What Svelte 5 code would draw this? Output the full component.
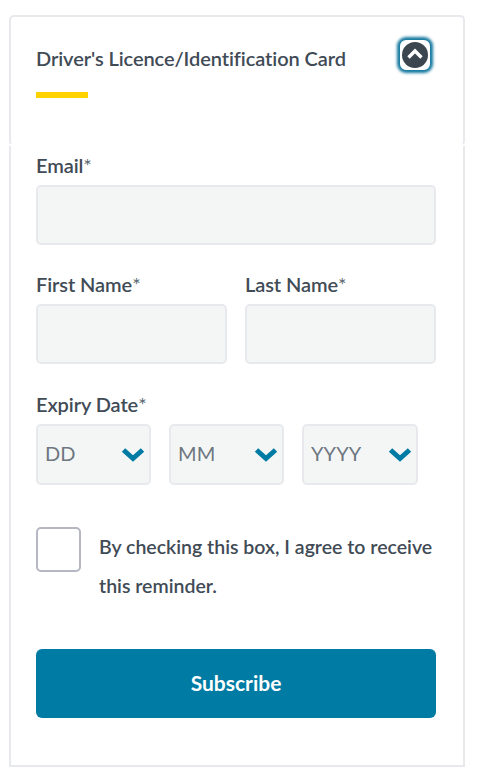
<script lang="ts">
  let email = $state('');
  let firstName = $state('');
  let lastName = $state('');
  let agreed = $state(false);

  const dateParts = [
    { id: 'day', placeholder: 'DD' },
    { id: 'month', placeholder: 'MM' },
    { id: 'year', placeholder: 'YYYY' }
  ];
</script>

<main>
  <section class="header">
    <h2>Driver's Licence/Identification Card</h2>
    <button class="toggle" aria-label="Collapse">
      <svg viewBox="0 0 26 26" width="26" height="26">
        <circle cx="13" cy="13" r="13" fill="#3c4650" />
        <path d="M6.5 15.5 13 9l6.5 6.5" fill="none" stroke="#fff" stroke-width="3.4" />
      </svg>
    </button>
    <div class="accent"></div>
  </section>

  <form class="body" onsubmit={(e) => e.preventDefault()}>
    <div class="field email">
      <label for="email">Email<span>*</span></label>
      <input id="email" type="text" bind:value={email} />
    </div>

    <div class="names">
      <div class="field">
        <label for="first">First Name<span>*</span></label>
        <input id="first" type="text" bind:value={firstName} />
      </div>
      <div class="field">
        <label for="last">Last Name<span>*</span></label>
        <input id="last" type="text" bind:value={lastName} />
      </div>
    </div>

    <div class="field expiry">
      <label for="day">Expiry Date<span>*</span></label>
      <div class="dates">
        {#each dateParts as part}
          <div class="select" id={part.id}>
            <span>{part.placeholder}</span>
            <svg viewBox="0 0 24 15" width="24" height="15">
              <path d="M2.5 3 12 11.5 21.5 3" fill="none" stroke="#007ba3" stroke-width="5" />
            </svg>
          </div>
        {/each}
      </div>
    </div>

    <label class="consent">
      <input type="checkbox" bind:checked={agreed} />
      <span>By checking this box, I agree to receive this reminder.</span>
    </label>

    <button class="subscribe" type="submit">Subscribe</button>
  </form>
</main>

<style>
  :global(body) {
    background: #fff;
    font-family: Lato, "Open Sans", sans-serif;
    color: #414b56;
  }

  main {
    padding: 15px 14px 16px 9px;
  }

  .header {
    position: relative;
    height: 131px;
    box-sizing: border-box;
    border: 2px solid #e8e9ed;
    border-bottom-color: transparent;
    border-radius: 5px;
    padding: 29px 25px 0;
  }

  h2 {
    margin: 0;
    font-size: 20px;
    line-height: 24px;
    font-weight: 600;
    letter-spacing: -0.08px;
  }

  .toggle {
    position: absolute;
    top: 23px;
    right: 33px;
    width: 26px;
    height: 26px;
    padding: 0;
    box-sizing: content-box;
    border: 2px solid #fff;
    border-radius: 6px;
    background: #fff;
    box-shadow: 0 0 3px 3px #16799f;
    display: flex;
  }

  .accent {
    width: 52px;
    height: 6px;
    margin-top: 22px;
    background: #ffd200;
  }

  .body {
    height: 621px;
    box-sizing: border-box;
    border: 2px solid #e8e9ed;
    border-top: 0;
    padding: 7px 27px 0 25px;
    display: flex;
    flex-direction: column;
  }

  .field {
    display: flex;
    flex-direction: column;
    min-width: 0;
  }

  label {
    font-size: 20px;
    line-height: 24px;
    font-weight: 600;
    letter-spacing: -0.08px;
  }

  label span {
    color: #5a6570;
    font-weight: 400;
  }

  .field > label {
    margin-bottom: 8px;
  }

  input[type="text"] {
    width: 100%;
    height: 60px;
    box-sizing: border-box;
    background: #f4f6f6;
    border: 2px solid #e8e9ed;
    border-radius: 5px;
  }

  .names {
    display: grid;
    grid-template-columns: 1fr 1fr;
    gap: 18px;
    margin-top: 27px;
  }

  .expiry {
    margin-top: 28px;
  }

  .dates {
    display: flex;
    gap: 18px;
  }

  .select {
    width: 115px;
    height: 61px;
    box-sizing: border-box;
    background: #f4f6f6;
    border: 2px solid #e8e9ed;
    border-radius: 5px;
    padding: 0 4px 0 7px;
    display: flex;
    align-items: center;
    justify-content: space-between;
    font-size: 20px;
    color: #6e7780;
  }

  .select span {
    margin-top: -3px;
    letter-spacing: 0.1px;
  }

  .select:last-child {
    width: 116px;
  }

  .consent {
    display: flex;
    gap: 18px;
    margin-top: 42px;
    line-height: 39px;
    font-size: 19.5px;
    letter-spacing: 0;
  }

  .consent span {
    color: #414b56;
    font-weight: 600;
  }

  input[type="checkbox"] {
    appearance: none;
    flex: none;
    width: 45px;
    height: 45px;
    margin: 0;
    box-sizing: border-box;
    background: #fff;
    border: 2px solid #b5b7c3;
    border-radius: 5px;
  }

  .subscribe {
    margin-top: 44px;
    height: 69px;
    border: 0;
    border-radius: 6px;
    background: #007ba3;
    color: #fff;
    font-family: inherit;
    font-size: 21px;
    font-weight: 700;
    padding-bottom: 3px;
  }
</style>
